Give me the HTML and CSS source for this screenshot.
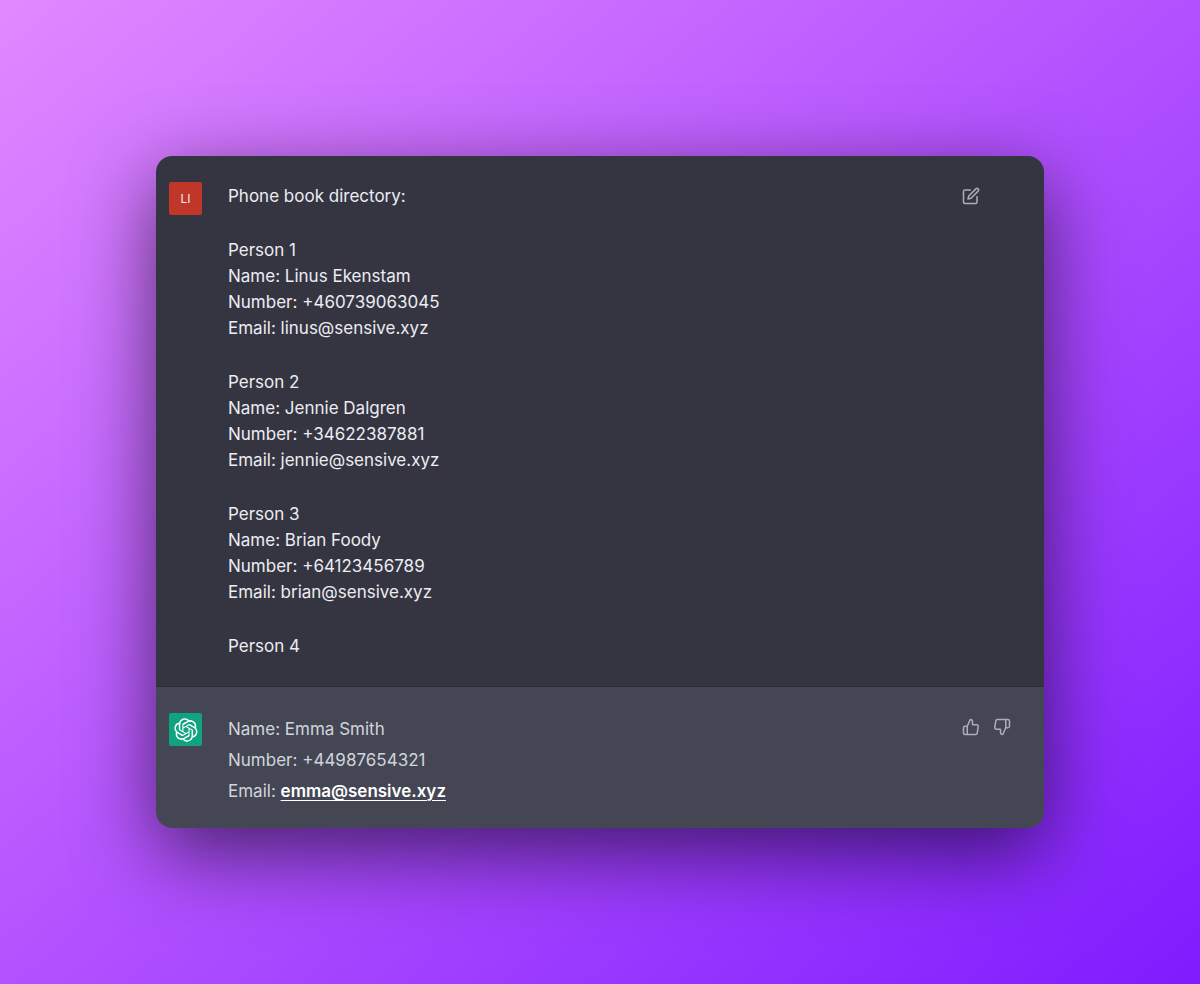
FILE: index.html
```html
<!DOCTYPE html>
<html lang="en">
<head>
    <meta charset="UTF-8">
    <meta name="viewport" content="width=device-width, initial-scale=1.0">
    <title>Phone book directory</title>
    <link rel="stylesheet" href="styles.css">
</head>
<body>

    <main class="chat">
        <!-- User message -->
        <section class="message user">
            <div class="avatar avatar-user">LI</div>
            <div class="text">
                <p>Phone book directory:</p>
                <p>Person 1<br>Name: Linus Ekenstam<br>Number: +460739063045<br>Email: linus@sensive.xyz</p>
                <p>Person 2<br>Name: Jennie Dalgren<br>Number: +34622387881<br>Email: jennie@sensive.xyz</p>
                <p>Person 3<br>Name: Brian Foody<br>Number: +64123456789<br>Email: brian@sensive.xyz</p>
                <p>Person 4</p>
            </div>
            <div class="actions">
                <button type="button" aria-label="Edit message">
                    <svg class="icon" viewBox="0 0 24 24">
                        <path d="M11 4H4a2 2 0 0 0-2 2v14a2 2 0 0 0 2 2h14a2 2 0 0 0 2-2v-7"/>
                        <path d="M18.5 2.5a2.121 2.121 0 0 1 3 3L12 15l-4 1 1-4 9.5-9.5z"/>
                    </svg>
                </button>
            </div>
        </section>

        <!-- Assistant reply -->
        <section class="message assistant">
            <div class="avatar avatar-assistant">
                <svg class="logo" viewBox="0 0 41 41" aria-hidden="true">
                    <path d="M37.532 16.8707C37.9808 15.5241 38.1363 14.0974 37.9886 12.6859C37.8409 11.2744 37.3934 9.91076 36.676 8.68622C35.6126 6.83404 33.9882 5.3676 32.0373 4.4985C30.0864 3.62941 27.9098 3.40259 25.8215 3.85078C24.8796 2.7893 23.7219 1.94125 22.4257 1.36341C21.1295 0.785575 19.7249 0.491269 18.3058 0.500197C16.1708 0.495044 14.0893 1.16803 12.3614 2.42214C10.6335 3.67624 9.34853 5.44666 8.6917 7.47815C7.30085 7.76286 5.98686 8.3414 4.8377 9.17505C3.68854 10.0087 2.73073 11.0782 2.02839 12.312C0.956464 14.1591 0.498905 16.2988 0.721698 18.4228C0.944492 20.5467 1.83612 22.5449 3.268 24.1293C2.81966 25.4759 2.66413 26.9026 2.81182 28.3141C2.95951 29.7256 3.40701 31.0892 4.12437 32.3138C5.18791 34.1659 6.8123 35.6322 8.76321 36.5013C10.7141 37.3704 12.8907 37.5973 14.9789 37.1492C15.9208 38.2107 17.0786 39.0587 18.3747 39.6366C19.6709 40.2144 21.0755 40.5087 22.4946 40.4998C24.6307 40.5054 26.7133 39.8321 28.4418 38.5772C30.1704 37.3223 31.4556 35.5506 32.1119 33.5179C33.5027 33.2332 34.8167 32.6547 35.9659 31.821C37.115 30.9874 38.0728 29.9178 38.7752 28.684C39.8458 26.8371 40.3023 24.6979 40.0789 22.5748C39.8556 20.4517 38.9639 18.4544 37.532 16.8707ZM22.4978 37.8849C20.7443 37.8874 19.0459 37.2733 17.6994 36.1501C17.7601 36.117 17.8666 36.0586 17.936 36.0161L25.9004 31.4156C26.1003 31.3019 26.2663 31.137 26.3813 30.9378C26.4964 30.7386 26.5563 30.5124 26.5549 30.2825V19.0542L29.9213 20.998C29.9389 21.0068 29.9541 21.0198 29.9656 21.0359C29.977 21.052 29.9842 21.0707 29.9867 21.0902V30.3889C29.9842 32.375 29.1946 34.2791 27.7909 35.6841C26.3872 37.0892 24.4838 37.8806 22.4978 37.8849ZM6.39227 31.0064C5.51397 29.4888 5.19742 27.7107 5.49804 25.9832C5.55718 26.0187 5.66048 26.0818 5.73461 26.1244L13.699 30.7248C13.8975 30.8408 14.1233 30.902 14.3532 30.902C14.583 30.902 14.8088 30.8408 15.0073 30.7248L24.731 25.1103V28.9979C24.7321 29.0177 24.7283 29.0376 24.7199 29.0556C24.7115 29.0736 24.6988 29.0893 24.6829 29.1012L16.6317 33.7497C14.9096 34.7416 12.8643 35.0097 10.9447 34.4954C9.02506 33.9811 7.38785 32.7263 6.39227 31.0064ZM4.29707 13.6194C5.17156 12.0998 6.55279 10.9364 8.19885 10.3327C8.19885 10.4013 8.19491 10.5228 8.19491 10.6071V19.808C8.19351 20.0378 8.25334 20.2638 8.36823 20.4629C8.48312 20.6619 8.64893 20.8267 8.84863 20.9404L18.5723 26.5542L15.206 28.4979C15.1894 28.5089 15.1703 28.5155 15.1505 28.5173C15.1307 28.5191 15.1107 28.516 15.0924 28.5082L7.04046 23.8557C5.32135 22.8601 4.06716 21.2235 3.55289 19.3046C3.03862 17.3858 3.30624 15.3413 4.29707 13.6194ZM31.955 20.0556L22.2312 14.4411L25.5976 12.4981C25.6142 12.4872 25.6333 12.4805 25.6531 12.4787C25.6729 12.4769 25.6928 12.4801 25.7111 12.4879L33.7631 17.1364C34.9967 17.849 36.0017 18.8982 36.6606 20.1613C37.3194 21.4244 37.6047 22.849 37.4832 24.2684C37.3617 25.6878 36.8382 27.0432 35.9743 28.1759C35.1103 29.3086 33.9415 30.1717 32.6047 30.6641C32.6047 30.5947 32.6047 30.4733 32.6047 30.3889V21.188C32.6066 20.9586 32.5474 20.7328 32.4332 20.5338C32.319 20.3348 32.154 20.1698 31.955 20.0556ZM35.3055 15.0128C35.2464 14.9765 35.1431 14.9142 35.069 14.8717L27.1045 10.2712C26.906 10.1554 26.6803 10.0943 26.4504 10.0943C26.2206 10.0943 25.9948 10.1554 25.7963 10.2712L16.0726 15.8858V11.9982C16.0715 11.9783 16.0753 11.9585 16.0837 11.9405C16.0921 11.9225 16.1048 11.9068 16.1207 11.8949L24.1719 7.25025C25.4053 6.53903 26.8158 6.19376 28.2383 6.25482C29.6608 6.31589 31.0364 6.78077 32.2044 7.59508C33.3723 8.40939 34.2842 9.53945 34.8334 10.8531C35.3826 12.1667 35.5464 13.6095 35.3055 15.0128ZM14.2424 21.9419L10.8752 19.9981C10.8576 19.9893 10.8423 19.9763 10.8309 19.9602C10.8195 19.9441 10.8122 19.9254 10.8098 19.9058V10.6071C10.8107 9.18295 11.2173 7.78848 11.9819 6.58696C12.7466 5.38544 13.8377 4.42659 15.1275 3.82264C16.4173 3.21869 17.8524 2.99464 19.2649 3.1767C20.6775 3.35876 22.0089 3.93941 23.1034 4.85067C23.0427 4.88379 22.937 4.94215 22.8668 4.98473L14.9024 9.58517C14.7025 9.69878 14.5366 9.86356 14.4215 10.0626C14.3065 10.2616 14.2466 10.4877 14.2479 10.7175L14.2424 21.9419ZM16.071 17.9991L20.4018 15.4978L24.7325 17.9975V22.9985L20.4018 25.4983L16.071 22.9985V17.9991Z"/>
                </svg>
            </div>
            <div class="text">
                <p>Name: Emma Smith<br>Number: +44987654321<br>Email: <a href="mailto:emma@sensive.xyz">emma@sensive.xyz</a></p>
            </div>
            <div class="actions">
                <button type="button" aria-label="Good response">
                    <svg class="icon" viewBox="0 0 24 24">
                        <path d="M14 9V5a3 3 0 0 0-3-3l-4 9v11h11.28a2 2 0 0 0 2-1.7l1.38-9a2 2 0 0 0-2-2.3zM7 22H4a2 2 0 0 1-2-2v-7a2 2 0 0 1 2-2h3"/>
                    </svg>
                </button>
                <button type="button" aria-label="Bad response">
                    <svg class="icon" viewBox="0 0 24 24">
                        <path d="M10 15v4a3 3 0 0 0 3 3l4-9V2H5.72a2 2 0 0 0-2 1.7l-1.38 9a2 2 0 0 0 2 2.3zm7-13h2.67A2.31 2.31 0 0 1 22 4v7a2.31 2.31 0 0 1-2.33 2H17"/>
                    </svg>
                </button>
            </div>
        </section>
    </main>

</body>
</html>
```
FILE: styles.css
```css
* {
    box-sizing: border-box;
}
body {
    margin: 0;
    padding: 156px;
    min-height: 100vh;
    font-family: Inter, "Liberation Sans", sans-serif;
    font-size: 17px;
    background: linear-gradient(140deg, #e089ff 0%, #b454ff 48%, #7e1cff 100%);
}
.chat {
    border-radius: 16px;
    overflow: hidden;
    box-shadow: 0 24px 80px rgba(0, 0, 0, 0.6);
}
.message {
    display: flex;
    align-items: flex-start;
    gap: 26px;
    padding: 26px 33px 21px 13px;
}
.user {
    background: #343541;
    color: #ececf1;
    line-height: 26px;
    padding-bottom: 27px;
    border-bottom: 1px solid #2c2d37;
}
.assistant {
    background: #444654;
    color: #d1d5db;
    line-height: 31px;
}
.avatar {
    display: flex;
    flex-shrink: 0;
    align-items: center;
    justify-content: center;
    width: 33px;
    height: 33px;
    border-radius: 2px;
}
.avatar-user {
    background: #c0372a;
    font-size: 12px;
}
.avatar-assistant {
    background: #10a37f;
}
.logo {
    width: 24px;
    height: 24px;
    fill: #fff;
}
.text {
    flex: 1;
    min-width: 0;
    padding-top: 1px;
}
.text p {
    margin: 0 0 28px;
}
.text p:last-child {
    margin-bottom: 0;
}
.text a {
    color: #fff;
    font-weight: 600;
    text-underline-offset: 3px;
}
.actions {
    display: flex;
    gap: 13px;
    width: 49px;
    padding-top: 5px;
}
.actions button {
    display: flex;
    padding: 0;
    border: none;
    background: none;
    color: #acacbe;
    cursor: pointer;
}
.actions button:hover {
    color: #fff;
}
.icon {
    width: 18px;
    height: 18px;
    fill: none;
    stroke: currentColor;
    stroke-width: 2;
    stroke-linecap: round;
    stroke-linejoin: round;
}
```
